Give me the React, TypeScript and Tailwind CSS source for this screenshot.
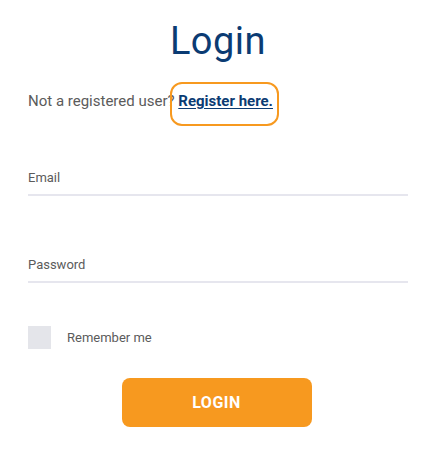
import React, { useState } from 'react';

export default function App() {
  const [remember, setRemember] = useState(false);

  return (
    <div className="w-[433px] h-[454px] bg-white pl-[28px] pr-[25px] pt-[18px] font-['Roboto',sans-serif]">
      <h1 className="text-center text-[38px] leading-[46px] text-[#0b3b73] tracking-[0.5px]">Login</h1>

      <p className="mt-[27px] text-[15px] leading-[20px] text-[#5b5b5b]">
        Not a registered user?{' '}
        <span className="relative inline-block">
          <a href="#" className="font-bold text-[#0b3b73] underline underline-offset-2">Register here.</a>
          {/* highlight ring */}
          <span className="absolute -left-[8px] -right-[6px] -top-[9px] -bottom-[15px] rounded-[12px] border-[2.5px] border-[#f7991f]" />
        </span>
      </p>

      <div className="mt-[54px] border-b-2 border-[#e6e6ee] pb-[5px]">
        <label className="text-[13px] leading-[18px] text-[#5b5b5b]">Email</label>
      </div>

      <div className="mt-[56px] border-b-2 border-[#e6e6ee] pb-[5px]">
        <label className="text-[13px] leading-[18px] text-[#5b5b5b]">Password</label>
      </div>

      <div className="mt-[43px] flex items-center gap-[16px]">
        <button
          onClick={() => setRemember(!remember)}
          className="w-[23px] h-[23px] bg-[#e4e5ea]"
        />
        <span className="text-[13px] text-[#5b5b5b]">Remember me</span>
      </div>

      <div className="mt-[29px] flex justify-center pr-[3px]">
        <button className="w-[190px] h-[49px] rounded-[8px] bg-[#f7991f] text-white font-bold text-[16px] tracking-[0.5px]">
          LOGIN
        </button>
      </div>
    </div>
  );
}
